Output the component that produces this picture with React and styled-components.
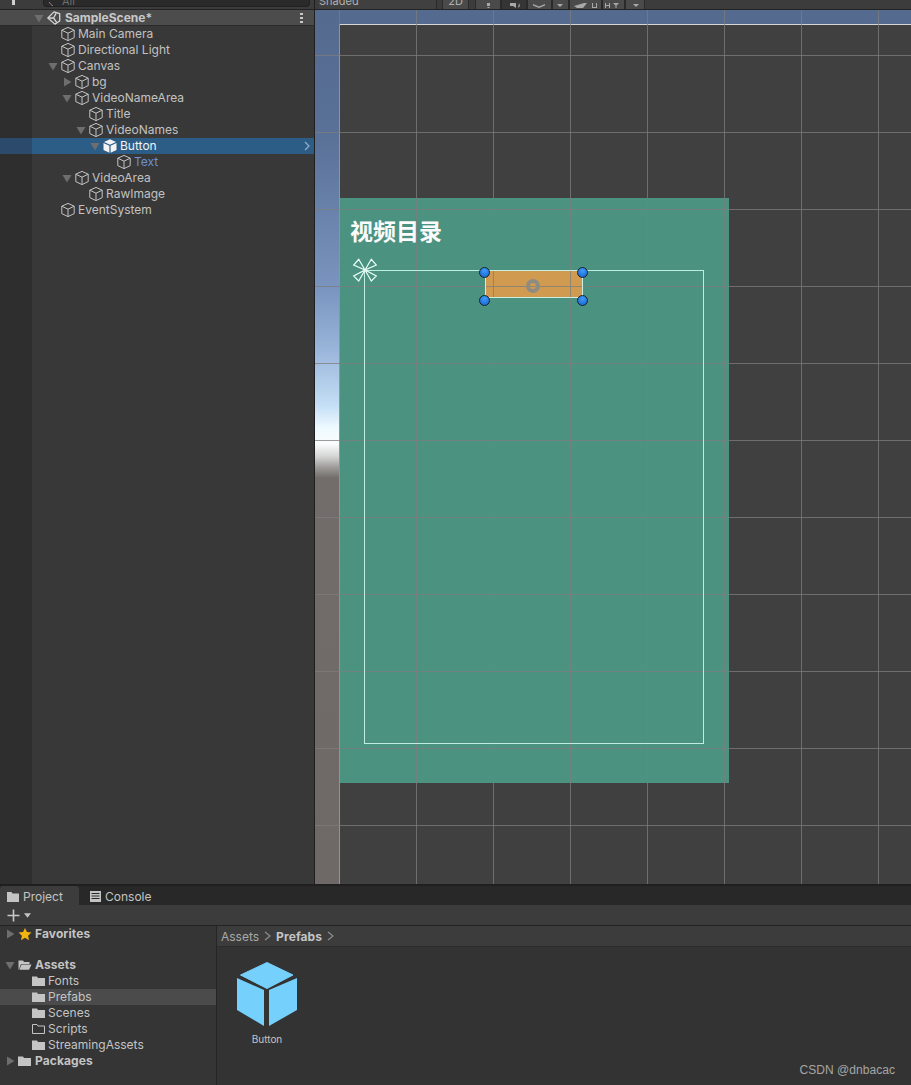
import React from "react";
import styled, { createGlobalStyle } from "styled-components";

const GlobalStyle = createGlobalStyle`
  html, body {
    margin: 0;
    padding: 0;
    background: #383838;
  }
  body {
    font-family: Inter, "Noto Sans", sans-serif;
  }
`;

const Page = styled.div`
  width: 911px;
  height: 1085px;
  overflow: hidden;
  display: flex;
  flex-direction: column;
  color: #c4c4c4;
`;

const TopArea = styled.div`
  height: 884px;
  display: flex;
  flex: none;
`;

const HierarchyPanel = styled.div`
  width: 314px;
  flex: none;
  background: linear-gradient(to right, #2e2e2e 32px, #383838 32px);
  overflow: hidden;
`;

const SearchStrip = styled.div`
  height: 9px;
  background: #3c3c3c;
  border-bottom: 1px solid #232323;
  display: flex;
  align-items: flex-start;
  padding-left: 12px;
`;

const HeaderTick = styled.span`
  width: 3px;
  height: 5px;
  background: #d0d0d0;
  margin-right: 28px;
`;

const SearchBox = styled.div`
  width: 267px;
  height: 7px;
  background: #2a2a2a;
  border-radius: 0 0 4px 4px;
  border: 1px solid #212121;
  border-top: none;
  box-sizing: border-box;
  display: flex;
  align-items: flex-end;
  padding-left: 4px;
  overflow: hidden;
  font-size: 11px;
  line-height: 11px;
  color: #6c6c6c;
`;

const SearchText = styled.span`
  margin-left: 7px;
  margin-bottom: -1px;
`;

const SceneRow = styled.div`
  height: 15px;
  background: #4c4c4c;
  border-bottom: 1px solid #2a2a2a;
  display: flex;
  align-items: center;
  padding-left: 34px;
  font-size: 12px;
  font-weight: 700;
  color: #c8c8c8;
`;

const SceneName = styled.span`
  margin-left: 2px;
`;

const Kebab = styled.span`
  margin-left: auto;
  margin-right: 11px;
  width: 3px;
  height: 12px;
  background-image: radial-gradient(circle, #c8c8c8 1.2px, transparent 1.4px);
  background-size: 3px 4px;
`;

const TreeList = styled.div`
  display: flex;
  flex-direction: column;
`;

const TreeRow = styled.div`
  height: 16px;
  display: flex;
  align-items: center;
  padding-left: ${(p) => p.$indent}px;
  font-size: 12px;
  line-height: 16px;
  color: ${(p) => (p.$link ? "#6d90d4" : p.$selected ? "#f2f2f2" : "#c2c2c2")};
  background: ${(p) =>
    p.$selected ? "linear-gradient(to right, #2c4a6c 32px, #2c5d87 32px)" : "transparent"};
`;

const TreeLabel = styled.span`
  margin-left: 1px;
`;

const RowChevron = styled.svg`
  margin-left: auto;
  margin-right: 3px;
`;

const Arrow = styled.svg`
  width: 10px;
  height: 10px;
  flex: none;
  margin-right: ${(p) => p.$gap ?? 3}px;
`;

const IconBox = styled.svg`
  flex: none;
  margin-right: 2px;
`;

const CubeIcon = styled.svg`
  flex: none;
  margin: 0 1px 0 -1px;
`;

const ScenePanel = styled.div`
  flex: 1;
  display: flex;
  flex-direction: column;
  border-left: 1px solid #1f1f1f;
`;

const SceneToolbar = styled.div`
  height: 9px;
  flex: none;
  background: #3c3c3c;
  border-bottom: 1px solid #232323;
  display: flex;
  align-items: stretch;
  padding-left: 4px;
  font-size: 11px;
  overflow: hidden;
`;

const ToolGroup = styled.div`
  width: ${(p) => p.$w}px;
  margin-left: ${(p) => p.$ml ?? 0}px;
  background: ${(p) => (p.$dark ? "#353535" : "#4a4a4a")};
  border-right: 1px solid #2a2a2a;
  border-left: 1px solid #2a2a2a;
  display: flex;
  align-items: flex-end;
  justify-content: center;
  box-sizing: border-box;
  color: #b0b0b0;
  overflow: hidden;
`;

const ShadedBox = styled(ToolGroup)`
  background: #404040;
  justify-content: flex-start;
  border-left: none;
`;

const ToolText = styled.span`
  line-height: 11px;
  margin-bottom: 2px;
  white-space: nowrap;
`;

const Viewport = styled.div`
  flex: 1;
  position: relative;
  overflow: hidden;
  background: #404040;
`;

/* scene view is a free canvas, so everything in here is placed by coordinates */
const Sky = styled.div`
  position: absolute;
  left: 0;
  top: 0;
  width: 24px;
  height: 100%;
  background: linear-gradient(
    to bottom,
    #546a8e 0,
    #5a7198 130px,
    #7a95bf 280px,
    #9ab5da 340px,
    #c4def6 395px,
    #eefaff 418px,
    #fafdfd 434px,
    #d2d3d1 447px,
    #9a9896 458px,
    #726d6a 468px,
    #6e6966 100%
  );
`;

const SkyTop = styled.div`
  position: absolute;
  left: 0;
  top: 0;
  width: 100%;
  height: 14px;
  background: #546a8e;
`;

const SceneBounds = styled.div`
  position: absolute;
  left: 24px;
  top: 14px;
  right: -4px;
  bottom: -4px;
  background: #404040;
  border: 1px solid #d6d6d6;
  border-width: 1px 0 0 1px;
`;

const TealPanel = styled.div`
  position: absolute;
  left: 25px;
  top: 188px;
  width: 389px;
  height: 585px;
  background: #4c9280;
`;

const RectOutline = styled.div`
  position: absolute;
  left: 49px;
  top: 260px;
  width: 338px;
  height: 472px;
  border: 1px solid #bfeee0;
`;

const Grid = styled.div`
  position: absolute;
  inset: 0;
  pointer-events: none;
  background-image: linear-gradient(to right, rgba(125, 125, 125, 0.75) 1px, transparent 1px),
    linear-gradient(to bottom, rgba(125, 125, 125, 0.75) 1px, transparent 1px);
  background-size: 77px 77px;
  background-position: 24px 45px;
`;

const Title = styled.div`
  position: absolute;
  left: 35px;
  top: 204px;
  font-family: "Noto Sans CJK SC", sans-serif;
  font-size: 23px;
  line-height: 32px;
  font-weight: 700;
  color: #fbfbfb;
`;

const OrangeButton = styled.div`
  position: absolute;
  left: 170px;
  top: 260px;
  width: 98px;
  height: 28px;
  box-sizing: border-box;
  background: #d09a50;
`;

const ButtonFrame = styled.div`
  position: absolute;
  left: 170px;
  top: 260px;
  width: 98px;
  height: 28px;
  box-sizing: border-box;
  border: 1px solid #c8efe2;
`;

const Pivot = styled.div`
  position: absolute;
  left: 211px;
  top: 269px;
  width: 14px;
  height: 14px;
  box-sizing: border-box;
  border-radius: 50%;
  border: 4px solid #8e8b80;
`;

const Handle = styled.div`
  position: absolute;
  left: ${(p) => p.$x}px;
  top: ${(p) => p.$y}px;
  width: 11px;
  height: 11px;
  box-sizing: border-box;
  border-radius: 50%;
  background: radial-gradient(circle at 50% 30%, #3f9cfa, #1460cc);
  border: 1px solid #16222e;
`;

const AnchorMark = styled.svg`
  position: absolute;
  left: 37px;
  top: 247px;
`;

const BottomArea = styled.div`
  flex: 1;
  display: flex;
  flex-direction: column;
  background: #353535;
  position: relative;
`;

const TabBar = styled.div`
  height: 19px;
  flex: none;
  background: #282828;
  border-top: 2px solid #1f1f1f;
  display: flex;
  font-size: 12px;
`;

const Tab = styled.div`
  width: ${(p) => p.$w}px;
  display: flex;
  align-items: center;
  padding: 1px 0 0 ${(p) => p.$pad}px;
  box-sizing: border-box;
  gap: 4px;
  color: #c4c4c4;
  background: ${(p) => (p.$active ? "#3c3c3c" : "transparent")};
  border-radius: 3px 3px 0 0;
`;

const AddBar = styled.div`
  height: 21px;
  flex: none;
  background: #3c3c3c;
  border-bottom: 1px solid #232323;
  box-sizing: border-box;
  display: flex;
  align-items: center;
  padding-left: 7px;
  gap: 4px;
`;

const ProjectBody = styled.div`
  flex: 1;
  display: flex;
  min-height: 0;
`;

const FolderTree = styled.div`
  width: 217px;
  flex: none;
  box-sizing: border-box;
  border-right: 1px solid #252525;
  display: flex;
  flex-direction: column;
`;

const FolderRow = styled.div`
  height: 16px;
  flex: none;
  box-sizing: border-box;
  padding-bottom: 1px;
  display: flex;
  align-items: center;
  padding-left: ${(p) => p.$indent}px;
  font-size: 12px;
  letter-spacing: ${(p) => (p.$bold ? "0.1px" : "0")};
  font-weight: ${(p) => (p.$bold ? 700 : 400)};
  color: #c4c4c4;
  background: ${(p) => (p.$active ? "#4b4b4b" : "transparent")};
  gap: 3px;
`;

const Spacer = styled.div`
  height: 15px;
  flex: none;
`;

const AssetPane = styled.div`
  flex: 1;
  background: #333333;
`;

const Breadcrumb = styled.div`
  height: 21px;
  background: #3c3c3c;
  border-bottom: 1px solid #2c2c2c;
  box-sizing: border-box;
  display: flex;
  align-items: center;
  padding-left: 4px;
  gap: 5px;
  font-size: 12px;
  color: #a9a9a9;
`;

const CrumbStrong = styled.span`
  font-weight: 700;
  letter-spacing: 0.1px;
  color: #c4c4c4;
`;

const AssetTile = styled.div`
  width: 80px;
  margin: 14px 0 0 10px;
  display: flex;
  flex-direction: column;
  align-items: center;
  font-size: 10px;
  color: #c4c4c4;
`;

const AssetLabel = styled.span`
  margin-top: 6px;
  line-height: 13px;
`;

const Watermark = styled.div`
  position: absolute;
  right: 16px;
  bottom: 8px;
  font-size: 12px;
  color: #a6a6a6;
  font-family: "Liberation Sans", sans-serif;
  letter-spacing: 0.05px;
`;

function Cube({ solid, color = "#c4c4c4" }) {
  if (solid) {
    return (
      <CubeIcon width="16" height="16" viewBox="0 0 16 16">
        <path d="M8 1.2 14 4 8 6.7 2 4Z" fill={color} />
        <path d="M1.5 5 7.4 7.7V14.8L1.5 12Z" fill={color} />
        <path d="M14.5 5 8.6 7.7V14.8L14.5 12Z" fill={color} />
      </CubeIcon>
    );
  }
  return (
    <CubeIcon width="16" height="16" viewBox="0 0 16 16" fill="none" stroke={color} strokeWidth="1">
      <path d="M8 1.4 14.2 4.2V11.6L8 14.6 1.8 11.6V4.2Z" strokeLinejoin="round" />
      <path d="M1.8 4.2 8 7.2 14.2 4.2M8 7.2V14.6" />
    </CubeIcon>
  );
}

function Tri({ open, gap, fill = "#6e6e6e" }) {
  return (
    <Arrow viewBox="0 0 10 10" $gap={gap}>
      {open ? <path d="M0.5 2H9.5L5 9.5Z" fill={fill} /> : <path d="M2 0.5V9.5L9.5 5Z" fill={fill} />}
    </Arrow>
  );
}

function Folder({ open, outline, wide }) {
  if (outline) {
    return (
      <svg width="13" height="12" viewBox="0 0 13 12" fill="none" stroke="#c4c4c4">
        <path d="M.5 1.5H5L6 3H12.5V10.5H.5Z" />
      </svg>
    );
  }
  if (open) {
    return (
      <svg width="14" height="12" viewBox="0 0 14 12">
        <path d="M.5 1.5H5L6 3H11.5V5H3L.9 10.5H.5Z" fill="#c4c4c4" />
        <path d="M3.5 5.5H13.5L11 10.8H1.4Z" fill="#c4c4c4" />
      </svg>
    );
  }
  return (
    <svg width={wide ? 14 : 13} height="12" viewBox={wide ? "0 0 14 12" : "0 0 13 12"}>
      <path d="M0 1.5H5L6 3H13V11H0Z" fill="#c4c4c4" />
    </svg>
  );
}

const hierarchy = [
  { name: "Main Camera", indent: 61 },
  { name: "Directional Light", indent: 61 },
  { name: "Canvas", indent: 61, open: true },
  { name: "bg", indent: 75, closed: true },
  { name: "VideoNameArea", indent: 75, open: true },
  { name: "Title", indent: 89 },
  { name: "VideoNames", indent: 89, open: true },
  { name: "Button", indent: 103, open: true, selected: true },
  { name: "Text", indent: 117, link: true },
  { name: "VideoArea", indent: 75, open: true },
  { name: "RawImage", indent: 89 },
  { name: "EventSystem", indent: 61 },
];

const handles = [
  [163.5, 256.5],
  [261.5, 256.5],
  [163.5, 284.5],
  [261.5, 284.5],
];

const toolGroups = [
  { w: 26, ml: 6, d: "M11 0H14V3H11ZM11.5 4H13.5V5H11.5Z" },
  { w: 26, dark: true, d: "M8 0H11L14 0V5L11 3H8ZM17 0 18 3 16 5Z" },
  { w: 25, d: "M5 1 11 3.5 17 1V2.5L11 5 5 2.5Z" },
  { w: 17, d: "M4 1H10L7 4Z" },
  { w: 33, d: "M4 3 14 0H17L13 5H7ZM22 0H23V4H26V0H27V5H22Z" },
  { w: 23, d: "M2 0H3V2H6V0H7V5H6V3H3V5H2ZM10 0H16L13.5 2.5V5H12.5V2.5Z" },
  { w: 20, d: "M7 1H13L10 4Z" },
];

export default function App() {
  return (
    <Page>
      <GlobalStyle />
      <TopArea>
        <HierarchyPanel>
          <SearchStrip>
            <HeaderTick />
            <SearchBox>
              <svg width="7" height="4" viewBox="0 0 7 4" fill="none" stroke="#8a8a8a">
                <path d="M1 0 3 2.5 5 4" />
              </svg>
              <SearchText>All</SearchText>
            </SearchBox>
          </SearchStrip>
          <SceneRow>
            <Tri open gap={3} />
            <IconBox width="14" height="14" viewBox="0 0 16 16" fill="none" stroke="#d4d4d4" strokeWidth="1.5">
              <path d="M8 1 14.5 3V11.5L9 15 1 8Z" strokeLinejoin="round" />
              <path d="M1 8H7.5M7.5 8 10.5 2.5M7.5 8 11 13" />
            </IconBox>
            <SceneName>SampleScene*</SceneName>
            <Kebab />
          </SceneRow>
          <TreeList>
            {hierarchy.map((item) => (
              <TreeRow
                key={item.name}
                $indent={item.open || item.closed ? item.indent - 13 : item.indent}
                $selected={item.selected}
                $link={item.link}
              >
                {item.open && <Tri open />}
                {item.closed && <Tri />}
                <Cube solid={item.selected} color={item.selected ? "#f4f4f4" : "#c4c4c4"} />
                <TreeLabel>{item.name}</TreeLabel>
                {item.selected && (
                  <RowChevron width="8" height="10" viewBox="0 0 8 10" fill="none" stroke="#8fb0cc" strokeWidth="1.2">
                    <path d="M2 1 6 5 2 9" />
                  </RowChevron>
                )}
              </TreeRow>
            ))}
          </TreeList>
        </HierarchyPanel>
        <ScenePanel>
          <SceneToolbar>
            <ShadedBox $w={118}>
              <ToolText>Shaded</ToolText>
            </ShadedBox>
            <ToolGroup $w={27} $ml={5}>
              <ToolText>2D</ToolText>
            </ToolGroup>
            {toolGroups.map((group) => (
              <ToolGroup key={group.d} $w={group.w} $ml={group.ml} $dark={group.dark}>
                <svg width={group.w - 2} height="9" viewBox={`0 -3 ${group.w - 2} 9`}>
                  <path d={group.d} fill="#a8a8a8" />
                </svg>
              </ToolGroup>
            ))}
          </SceneToolbar>
          <Viewport>
            <SkyTop />
            <Sky />
            <SceneBounds />
            <TealPanel />
            <OrangeButton />
            <Grid />
            <RectOutline />
            <ButtonFrame />
            <Title>视频目录</Title>
            <Pivot />
            {handles.map(([x, y]) => (
              <Handle key={`${x}-${y}`} $x={x} $y={y} />
            ))}
            <AnchorMark width="26" height="26" viewBox="0 0 26 26" fill="none" stroke="#eafff8" strokeWidth="1.2">
              <path d="M13 13 6.7 2.3 1.7 8ZM13 13 19.3 2.3 24.3 8ZM13 13 6.7 24 1.7 19ZM13 13 19.3 24 24.3 19Z" />
            </AnchorMark>
          </Viewport>
        </ScenePanel>
      </TopArea>
      <BottomArea>
        <TabBar>
          <Tab $w={79} $pad={7} $active>
            <svg width="12" height="11" viewBox="0 0 12 11">
              <path d="M0 1H4.5L5.5 2.5H12V11H0Z" fill="#c4c4c4" />
            </svg>
            Project
          </Tab>
          <Tab $w={90} $pad={11}>
            <svg width="11" height="11" viewBox="0 0 11 11">
              <path d="M0 0H11V11H0Z M1.5 2V3H9.5V2Z M1.5 4.5V5.5H9.5V4.5Z M1.5 7V8H9.5V7Z" fill="#c4c4c4" fillRule="evenodd" />
            </svg>
            Console
          </Tab>
        </TabBar>
        <AddBar>
          <svg width="13" height="13" viewBox="0 0 13 13" stroke="#c8c8c8" strokeWidth="1.6">
            <path d="M6.5 0.5V12.5M0.5 6.5H12.5" />
          </svg>
          <svg width="7" height="5" viewBox="0 0 8 5">
            <path d="M0 0H8L4 5Z" fill="#c4c4c4" />
          </svg>
        </AddBar>
        <ProjectBody>
          <FolderTree>
            <FolderRow $indent={5} $bold>
              <Tri gap={0} />
              <svg width="14" height="14" viewBox="0 0 24 24">
                <path d="M12 1.5 15.3 8.6 23 9.6 17.3 14.8 18.9 22.5 12 18.6 5.1 22.5 6.7 14.8 1 9.6 8.7 8.6Z" fill="#f5b50f" />
              </svg>
              Favorites
            </FolderRow>
            <Spacer />
            <FolderRow $indent={5} $bold>
              <Tri open gap={0} />
              <Folder open />
              Assets
            </FolderRow>
            {["Fonts", "Prefabs", "Scenes", "Scripts", "StreamingAssets"].map((name) => (
              <FolderRow key={name} $indent={32} $active={name === "Prefabs"}>
                <Folder outline={name === "Scripts"} />
                {name}
              </FolderRow>
            ))}
            <FolderRow $indent={5} $bold>
              <Tri gap={0} />
              <Folder wide />
              Packages
            </FolderRow>
          </FolderTree>
          <AssetPane>
            <Breadcrumb>
              <span>Assets</span>
              <svg width="7" height="10" viewBox="0 0 7 10" fill="none" stroke="#8c8c8c" strokeWidth="1.2">
                <path d="M1 1 6 5 1 9" />
              </svg>
              <CrumbStrong>Prefabs</CrumbStrong>
              <svg width="7" height="10" viewBox="0 0 7 10" fill="none" stroke="#8c8c8c" strokeWidth="1.2">
                <path d="M1 1 6 5 1 9" />
              </svg>
            </Breadcrumb>
            <AssetTile>
              <svg width="60" height="66" viewBox="0 0 60 66">
                <path d="M30 1.5 56 14 30 27.5 3.5 14Z" fill="#76d0fc" stroke="#76d0fc" strokeWidth="1" strokeLinejoin="round" />
                <path d="M0 17 27 29V65L0 49Z" fill="#76d0fc" />
                <path d="M60 17 32 29V65L60 49Z" fill="#76d0fc" />
              </svg>
              <AssetLabel>Button</AssetLabel>
            </AssetTile>
          </AssetPane>
        </ProjectBody>
        <Watermark>CSDN @dnbacac</Watermark>
      </BottomArea>
    </Page>
  );
}
